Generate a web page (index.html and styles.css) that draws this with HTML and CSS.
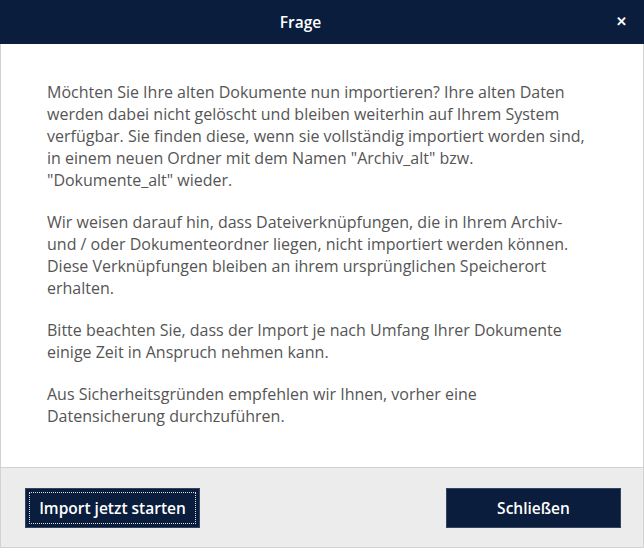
FILE: index.html
```html
<!DOCTYPE html>
<html lang="de">
<head>
    <meta charset="UTF-8">
    <meta name="viewport" content="width=device-width, initial-scale=1.0">
    <title>Frage</title>
    <link rel="stylesheet" href="styles.css">
</head>
<body>
    <div class="dialog">
        <header class="title-bar">
            <span class="title">Frage</span>
            <span class="close">&#x2715;</span>
        </header>

        <main class="content">
            <p>Möchten Sie Ihre alten Dokumente nun importieren? Ihre alten Daten werden dabei nicht gelöscht und bleiben weiterhin auf Ihrem System verfügbar. Sie finden diese, wenn sie vollständig importiert worden sind, in einem neuen Ordner mit dem Namen "Archiv_alt" bzw. "Dokumente_alt" wieder.</p>
            <p>Wir weisen darauf hin, dass Dateiverknüpfungen, die in Ihrem Archiv- und / oder Dokumenteordner liegen, nicht importiert werden können. Diese Verknüpfungen bleiben an ihrem ursprünglichen Speicherort erhalten.</p>
            <p>Bitte beachten Sie, dass der Import je nach Umfang Ihrer Dokumente einige Zeit in Anspruch nehmen kann.</p>
            <p>Aus Sicherheitsgründen empfehlen wir Ihnen, vorher eine Datensicherung durchzuführen.</p>
        </main>

        <footer class="actions">
            <button class="btn focused">Import jetzt starten</button>
            <button class="btn">Schließen</button>
        </footer>
    </div>
</body>
</html>
```

FILE: styles.css
```css
*{
    margin: 0;
    padding: 0;
    box-sizing: border-box;
}

body{
    font-family: "Open Sans", "Noto Sans", sans-serif;
    background-color: #fff;
}

.dialog{
    width: 644px;
    height: 548px;
    display: flex;
    flex-direction: column;
}

.title-bar{
    height: 44px;
    background-color: #0a1d3d;
    color: #fff;
    display: flex;
    align-items: center;
    justify-content: center;
    padding-right: 43px;
    position: relative;
}

.title{
    font-size: 15.5px;
    font-weight: 600;
}

.close{
    position: absolute;
    right: 17px;
    top: 12px;
    font-size: 13px;
    font-weight: 700;
}

.content{
    flex: 1;
    padding: 37px 48px 0 46px;
    border-left: 1px solid #d2d2d2;
    border-right: 1px solid #d2d2d2;
    color: #555;
    font-size: 16px;
    line-height: 22px;
}

.content p{
    margin-bottom: 20px;
}

.actions{
    height: 81px;
    background-color: #ececec;
    border: 1px solid #d2d2d2;
    display: flex;
    justify-content: space-between;
    padding: 20px 22px 0 24px;
}

.btn{
    width: 175px;
    height: 40px;
    background-color: #0a1d3d;
    border: 1px solid #33445f;
    color: #fff;
    font-family: inherit;
    font-size: 15.5px;
    font-weight: 600;
}

.btn.focused{
    outline: 1px dotted #ddd;
    outline-offset: -5px;
}
```
